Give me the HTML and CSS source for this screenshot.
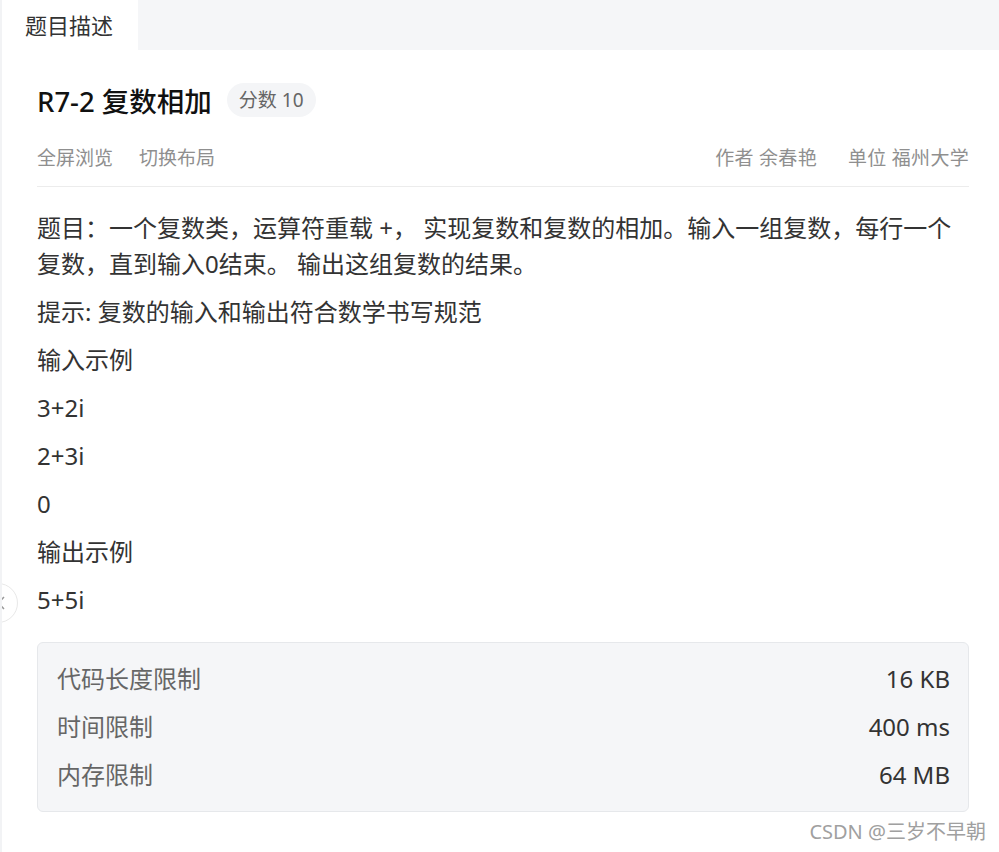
FILE: index.html
```html
<!DOCTYPE html>
<html lang="zh-CN">
<head>
<meta charset="utf-8">
<link rel="stylesheet" href="styles.css">
<title>题目描述</title>
</head>
<body>
<div class="page">
  <div class="tabs">
    <div class="tab active">题目描述</div>
    <div class="tab-rest"></div>
  </div>

  <div class="problem">
    <div class="title-row">
      <h1 class="title">R7-2 复数相加</h1>
      <span class="score">分数 10</span>
    </div>

    <div class="meta">
      <div class="meta-left">
        <span>全屏浏览</span>
        <span>切换布局</span>
      </div>
      <div class="meta-right">
        <span>作者 余春艳</span>
        <span>单位 福州大学</span>
      </div>
    </div>

    <div class="content">
      <p>题目：一个复数类，运算符重载 +， 实现复数和复数的相加。输入一组复数，每行一个复数，直到输入0结束。 输出这组复数的结果。</p>
      <p>提示: 复数的输入和输出符合数学书写规范</p>
      <p>输入示例</p>
      <p>3+2i</p>
      <p>2+3i</p>
      <p>0</p>
      <p>输出示例</p>
      <p>5+5i</p>
    </div>

    <div class="limits">
      <div class="limit"><span class="limit-name">代码长度限制</span><span class="limit-val">16 KB</span></div>
      <div class="limit"><span class="limit-name">时间限制</span><span class="limit-val">400 ms</span></div>
      <div class="limit"><span class="limit-name">内存限制</span><span class="limit-val">64 MB</span></div>
    </div>

    <div class="watermark">CSDN @三岁不早朝</div>
  </div>

  <div class="collapse">
    <svg width="8" height="14" viewBox="0 0 8 14"><path d="M7 1 L1.5 7 L7 13" fill="none" stroke="#999" stroke-width="1.5"/></svg>
  </div>
</div>
</body>
</html>
```

FILE: styles.css
```css
* {
  box-sizing: border-box;
}

body {
  margin: 0;
  background: #fff;
  font-family: "Noto Sans", "Noto Sans CJK SC", sans-serif;
  color: #333;
}

.page {
  position: relative;
  width: 999px;
  height: 852px;
  overflow: hidden;
  border-left: 2px solid #f2f3f5;
}

.tabs {
  display: flex;
  height: 50px;
}

.tab {
  font-size: 22px;
  line-height: 50px;
  padding: 0 25px 0 23px;
  color: #333;
  background: #fff;
}

.tab-rest {
  flex: 1;
  background: #f5f6f8;
}

.problem {
  padding: 0 30px 0 35px;
}

.title-row {
  display: flex;
  align-items: center;
  gap: 15px;
  margin-top: 33px;
  height: 34px;
}

.title {
  margin: 0;
  font-size: 27.5px;
  font-weight: 500;
  color: #111;
}

.score {
  background: #f4f5f7;
  color: #666;
  font-size: 19px;
  height: 34px;
  line-height: 34px;
  padding: 0 12px;
  border-radius: 17px;
}

.meta {
  display: flex;
  justify-content: space-between;
  font-size: 19px;
  color: #8f8f8f;
  margin-top: 26px;
  padding-bottom: 15px;
  border-bottom: 1px solid #ececec;
}

.meta-left, .meta-right {
  display: flex;
  gap: 26px;
}

.meta-right {
  gap: 31px;
}

.meta-right span {
  letter-spacing: 0.3px;
}

.content {
  padding-top: 23px;
  font-size: 24px;
  color: #333;
}

.content p {
  margin: 0 0 12px;
  line-height: 36px;
}

.limits {
  margin-top: 24px;
  background: #f5f6f8;
  border: 1px solid #e6e8eb;
  border-radius: 6px;
  padding: 12px 18px 12px 19px;
}

.limit {
  display: flex;
  justify-content: space-between;
  height: 48px;
  line-height: 48px;
  font-size: 24px;
}

.limit-name {
  color: #666;
}

.limit-val {
  color: #333;
}

.watermark {
  text-align: right;
  margin-right: -17px;
  margin-top: 7px;
  font-size: 20px;
  line-height: 26px;
  color: #a0a0a0;
}

.collapse {
  position: absolute;
  left: -24px;
  top: 583px;
  width: 40px;
  height: 40px;
  border-radius: 50%;
  background: #fff;
  border: 1px solid #e8e8e8;
  display: flex;
  align-items: center;
  justify-content: flex-end;
  padding-right: 12px;
}
```
